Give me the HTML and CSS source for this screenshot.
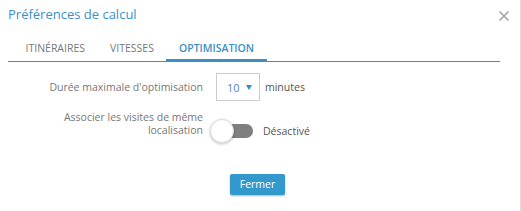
FILE: index.html
```html
<!DOCTYPE html>
<html lang="fr">
<head>
    <meta charset="UTF-8">
    <meta name="viewport" content="width=device-width, initial-scale=1.0">
    <title>Préférences de calcul</title>
    <link rel="stylesheet" href="styles.css">
</head>
<body>
    <div class="modal">
        <div class="modal-header">
            <h2 class="modal-title">Préférences de calcul</h2>
            <span class="close">
                <svg width="10" height="10" viewBox="0 0 10 10"><path d="M0.5 0.5 L9.5 9.5 M9.5 0.5 L0.5 9.5" stroke="#999" stroke-width="1.4"/></svg>
            </span>
        </div>

        <ul class="tabs">
            <li>ITINÉRAIRES</li>
            <li>VITESSES</li>
            <li class="active">OPTIMISATION</li>
        </ul>

        <div class="tab-body">
            <div class="form-row">
                <label class="form-label">Durée maximale d'optimisation</label>
                <div class="form-control">
                    <div class="select">
                        <span class="select-value">10</span>
                        <span class="caret"></span>
                    </div>
                    <span class="unit">minutes</span>
                </div>
            </div>
            <div class="form-row row-top">
                <label class="form-label">Associer les visites de même<br>localisation</label>
                <div class="form-control toggle-wrap">
                    <span class="toggle"><span class="knob"></span></span>
                    <span class="unit">Désactivé</span>
                </div>
            </div>
        </div>

        <div class="modal-footer">
            <button class="btn">Fermer</button>
        </div>
    </div>
</body>
</html>
```

FILE: styles.css
```css
body {
    font-family: 'Open Sans', sans-serif;
    margin: 0;
    padding: 0;
    background-color: #fff;
}

.modal {
    width: 520px;
    height: 211px;
    border-right: 1px solid #ddd;
    background: #fff;
}

.modal-header {
    display: flex;
    justify-content: space-between;
    align-items: flex-start;
    padding: 5px 11px 0 8px;
    height: 18px;
}

.modal-title {
    margin: 0;
    font-size: 13px;
    font-weight: normal;
    color: #3d8fca;
}

.close {
    display: flex;
    margin-top: 6px;
    cursor: pointer;
}

.tabs {
    display: flex;
    list-style: none;
    margin: 18px 20px 0 8px;
    padding: 0 0 0 5px;
    border-bottom: 1px solid #3a8fc5;
}

.tabs li {
    font-size: 10.5px;
    color: #777;
    padding: 0 12.5px 4px;
    border-bottom: 3px solid transparent;
    margin-bottom: -1px;
}

.tabs li.active {
    color: #3a8fc5;
    font-weight: 600;
    border-bottom-color: #3a8fc5;
}

.tab-body {
    padding-top: 11px;
}

.form-row {
    display: flex;
    align-items: center;
    margin-bottom: 10px;
}

.row-top {
    align-items: flex-start;
}

.form-label {
    box-sizing: border-box;
    width: 216px;
    padding-right: 13px;
    text-align: right;
    font-size: 10.5px;
    line-height: 12.5px;
    color: #777;
}

.form-control {
    display: flex;
    align-items: center;
}

.select {
    display: flex;
    align-items: center;
    justify-content: space-between;
    box-sizing: border-box;
    width: 44px;
    height: 28px;
    padding: 0 7px 0 10px;
    border: 1px solid #ccc;
}

.select-value {
    font-size: 11px;
    color: #4f86bf;
}

.caret {
    width: 0;
    height: 0;
    border-left: 3px solid transparent;
    border-right: 3px solid transparent;
    border-top: 5px solid #2f8fd0;
}

.unit {
    margin-left: 5px;
    font-size: 10.5px;
    color: #555;
}

.toggle-wrap {
    margin-top: 8px;
    margin-left: -6px;
}

.toggle {
    position: relative;
    display: flex;
    align-items: center;
    width: 43px;
    height: 24px;
}

.toggle::before {
    content: '';
    display: block;
    margin-left: 5px;
    width: 38px;
    height: 14px;
    border-radius: 7px;
    background: #7f7f7f;
}

.knob {
    position: absolute;
    left: 0;
    top: 0;
    width: 22px;
    height: 22px;
    border-radius: 50%;
    background: #fff;
    border: 1px solid #ddd;
    box-shadow: 0 1px 3px rgba(0, 0, 0, 0.25);
}

.toggle-wrap .unit {
    margin-left: 10px;
}

.modal-footer {
    text-align: center;
    padding: 18px 5px 0 0;
}

.btn {
    font-family: 'Open Sans', sans-serif;
    background-color: #3399cc;
    color: #fff;
    font-size: 10.5px;
    height: 21px;
    padding: 0 10px;
    border: none;
    border-radius: 2px;
    box-shadow: 0 1px 2px rgba(0, 0, 0, 0.3);
    cursor: pointer;
}
```
